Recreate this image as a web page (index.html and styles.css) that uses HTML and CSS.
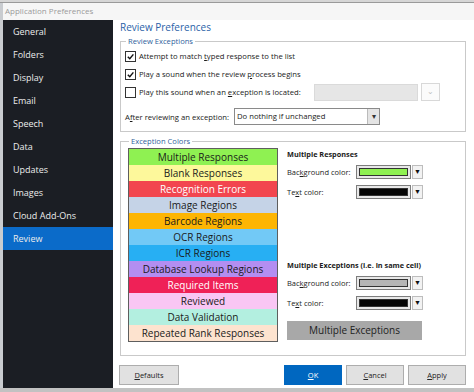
FILE: index.html
```html
<!DOCTYPE html>
<html lang="en">
<head>
  <meta charset="UTF-8">
  <title>Application Preferences</title>
  <link rel="stylesheet" href="styles.css">
</head>
<body>

  <div class="backstrip"></div>

  <div class="window">
    <div class="titlebar">Application Preferences</div>

    <div class="frame">
      <!-- left navigation -->
      <nav class="sidebar">
        <div class="nav-item">General</div>
        <div class="nav-item">Folders</div>
        <div class="nav-item">Display</div>
        <div class="nav-item">Email</div>
        <div class="nav-item">Speech</div>
        <div class="nav-item">Data</div>
        <div class="nav-item">Updates</div>
        <div class="nav-item">Images</div>
        <div class="nav-item">Cloud Add-Ons</div>
        <div class="nav-item active">Review</div>
      </nav>

      <main class="content">
        <h1>Review Preferences</h1>

        <fieldset class="group exceptions">
          <legend>Review Exceptions</legend>
          <div class="check-row">
            <span class="checkbox checked"><svg viewBox="0 0 10 10"><path d="M2 5.2 L4.2 7.4 L8.2 2.6" /></svg></span>
            <span>Attempt to match <u>t</u>yped response to the list</span>
          </div>
          <div class="check-row">
            <span class="checkbox checked"><svg viewBox="0 0 10 10"><path d="M2 5.2 L4.2 7.4 L8.2 2.6" /></svg></span>
            <span>Play a sound when the review <u>p</u>rocess begins</span>
          </div>
          <div class="check-row">
            <span class="checkbox"></span>
            <span class="check-label">Play this sound when an <u>e</u>xception is located:</span>
            <span class="sound-field"></span>
            <span class="sound-btn">&#8964;</span>
          </div>
          <div class="after-row">
            <span class="after-label">A<u>f</u>ter reviewing an exception:</span>
            <span class="select">
              <span class="select-text">Do nothing if unchanged</span>
              <span class="select-arrow">&#9662;</span>
            </span>
          </div>
        </fieldset>

        <fieldset class="group colors">
          <legend>Exception Colors</legend>
          <div class="colors-body">
            <div class="color-list">
              <div class="color-item c-multiple">Multiple Responses</div>
              <div class="color-item c-blank">Blank Responses</div>
              <div class="color-item c-recog">Recognition Errors</div>
              <div class="color-item c-image">Image Regions</div>
              <div class="color-item c-barcode">Barcode Regions</div>
              <div class="color-item c-ocr">OCR Regions</div>
              <div class="color-item c-icr">ICR Regions</div>
              <div class="color-item c-db">Database Lookup Regions</div>
              <div class="color-item c-required">Required Items</div>
              <div class="color-item c-reviewed">Reviewed</div>
              <div class="color-item c-valid">Data Validation</div>
              <div class="color-item c-repeat">Repeated Rank Responses</div>
            </div>

            <div class="color-editor">
              <div class="editor-title">Multiple Responses</div>
              <div class="editor-row first">
                <span class="editor-label">Bac<u>k</u>ground color:</span>
                <span class="swatch"><span class="swatch-fill fill-green"></span></span>
                <span class="swatch-arrow">&#9660;</span>
              </div>
              <div class="editor-row">
                <span class="editor-label">Te<u>x</u>t color:</span>
                <span class="swatch"><span class="swatch-fill fill-black"></span></span>
                <span class="swatch-arrow">&#9660;</span>
              </div>

              <div class="editor-title second">Multiple Exceptions (i.e. in same cell)</div>
              <div class="editor-row first">
                <span class="editor-label">Bac<u>k</u>ground color:</span>
                <span class="swatch"><span class="swatch-fill fill-gray"></span></span>
                <span class="swatch-arrow">&#9660;</span>
              </div>
              <div class="editor-row">
                <span class="editor-label">Te<u>x</u>t color:</span>
                <span class="swatch"><span class="swatch-fill fill-black"></span></span>
                <span class="swatch-arrow">&#9660;</span>
              </div>
              <div class="preview">Multiple Exceptions</div>
            </div>
          </div>
        </fieldset>

        <div class="buttons">
          <button class="btn"><u>D</u>efaults</button>
          <span class="spacer"></span>
          <button class="btn primary"><u>O</u>K</button>
          <button class="btn"><u>C</u>ancel</button>
          <button class="btn"><u>A</u>pply</button>
        </div>
      </main>
    </div>
  </div>

  <div class="bottomstrip"></div>

</body>
</html>
```

FILE: styles.css
```css
body {
  margin: 0;
  padding: 0;
  width: 474px;
  height: 392px;
  overflow: hidden;
  background-color: #c9ccd0;
  font-family: "Open Sans", "Noto Sans", sans-serif;
  color: #1b1b1b;
}

u {
  text-decoration: underline;
  text-underline-offset: 1px;
}

.backstrip {
  height: 3px;
  background-color: #d6d6d6;
  border-bottom: 1px solid #9a9a9a;
  box-sizing: border-box;
}

.window {
  margin-left: 3px;
  background-color: #fff;
}

.titlebar {
  height: 17px;
  line-height: 15px;
  padding-left: 2px;
  font-size: 8px;
  color: #9a9a9a;
  background-color: #f6f6f6;
}

.frame {
  display: flex;
  height: 368px;
}

/* left navigation */
.sidebar {
  width: 110px;
  flex: none;
  background-color: #1b1e24;
}

.nav-item {
  height: 23px;
  line-height: 23px;
  padding-left: 10px;
  font-size: 9px;
  color: #ececec;
}

.nav-item.active {
  background-color: #0b6bc9;
}

/* main panel */
.content {
  flex: 1;
  padding: 0 8px 0 7px;
}

h1 {
  margin: -1px 0 0 0;
  line-height: 16px;
  font-size: 10px;
  font-weight: normal;
  color: #2b62a8;
}

.group {
  margin: 0;
  padding: 0 0 0 4px;
  border: 1px solid #c9c9c9;
}

.group legend {
  padding: 0 2px;
  margin-left: 1px;
  line-height: 12px;
  font-size: 7.6px;
  color: #2f5f9c;
}

.exceptions {
  padding-bottom: 6px;
}

.check-row {
  display: flex;
  align-items: center;
  height: 18px;
  font-size: 7.7px;
}

.checkbox {
  width: 9px;
  height: 9px;
  margin-right: 3px;
  border: 1px solid #333;
  background-color: #fff;
  flex: none;
}

.checkbox svg {
  display: block;
  width: 9px;
  height: 9px;
  fill: none;
  stroke: #111;
  stroke-width: 1.6;
}

.check-label {
  width: 175px;
}

.sound-field {
  width: 104px;
  height: 17px;
  background-color: #e6e6e6;
  border: 1px solid #dadada;
  box-sizing: border-box;
}

.sound-btn {
  width: 19px;
  height: 18px;
  margin-left: 3px;
  border: 1px solid #d8d8d8;
  box-sizing: border-box;
  background-color: #fbfbfb;
  color: #c0c0c0;
  font-size: 8px;
  line-height: 14px;
  text-align: center;
}

.after-row {
  display: flex;
  align-items: center;
  height: 17px;
  margin-top: 7px;
  font-size: 7.7px;
}

.after-label {
  width: 109px;
}

.select {
  display: flex;
  width: 146px;
  height: 17px;
  border: 1px solid #8a8a8a;
  box-sizing: border-box;
}

.select-text {
  flex: 1;
  padding-left: 2px;
  line-height: 15px;
}

.select-arrow {
  width: 11px;
  border-left: 1px solid #bbb;
  background-color: #e4e4e4;
  font-size: 8px;
  line-height: 14px;
  text-align: center;
  color: #333;
}

/* exception colors */
.colors {
  margin-top: 3px;
  padding: 1px 0 13px 7px;
}

.colors-body {
  display: flex;
}

.color-list {
  width: 150px;
  border: 1px solid #5e5e5e;
  box-sizing: border-box;
}

.color-item {
  height: 16px;
  line-height: 16px;
  text-align: center;
  font-size: 10px;
  color: #1a1a1a;
}

.c-multiple { background-color: #8ff152; }
.c-blank { background-color: #fdf89b; }
.c-recog { background-color: #f2464f; color: #fff; }
.c-image { background-color: #c5d3e7; }
.c-barcode { background-color: #fdb503; }
.c-ocr { background-color: #72c9f6; }
.c-icr { background-color: #27aff3; }
.c-db { background-color: #b38ef1; }
.c-required { background-color: #ef2157; color: #fff; }
.c-reviewed { background-color: #f9c6f4; }
.c-valid { background-color: #b3efe0; }
.c-repeat { background-color: #fde3cf; }

.color-editor {
  margin-left: 9px;
  font-size: 7.5px;
}

.editor-title {
  height: 12px;
  line-height: 12px;
  font-weight: bold;
  font-size: 7.3px;
}

.editor-title.second {
  margin-top: 60px;
}

.editor-row {
  display: flex;
  align-items: center;
  height: 14px;
  margin-top: 6px;
}

.editor-row.first {
  margin-top: 5px;
}

.editor-label {
  width: 69px;
}

.swatch {
  display: flex;
  width: 55px;
  height: 14px;
  padding: 2px;
  border: 1px solid #7d7d7d;
  box-sizing: border-box;
  background-color: #e8e8e8;
}

.swatch-fill {
  flex: 1;
  border: 1px solid #333;
}

.fill-green { background-color: #8ff152; }
.fill-black { background-color: #050505; }
.fill-gray { background-color: #b5b5b5; }

.swatch-arrow {
  width: 11px;
  height: 14px;
  margin-left: 1px;
  border: 1px solid #bdbdbd;
  box-sizing: border-box;
  background-color: #f2f2f2;
  font-size: 7px;
  line-height: 12px;
  text-align: center;
  color: #111;
}

.preview {
  width: 135px;
  height: 19px;
  margin-top: 11px;
  line-height: 19px;
  text-align: center;
  font-size: 10px;
  color: #222;
  background-color: #a8a8a8;
}

/* dialog buttons */
.buttons {
  display: flex;
  gap: 4px;
  margin-top: 9px;
}

.spacer {
  flex: 1;
}

.btn {
  width: 58px;
  height: 20px;
  padding: 0;
  font-family: inherit;
  font-size: 7.5px;
  color: #222;
  background-color: #e1e1e1;
  border: 1px solid #adadad;
}

.btn:first-child {
  width: 60px;
  margin-left: -1px;
}

.btn.primary {
  background-color: #0067c0;
  border-color: #0067c0;
  color: #fff;
}

.bottomstrip {
  height: 4px;
  background-color: #c2c2c2;
}
```
